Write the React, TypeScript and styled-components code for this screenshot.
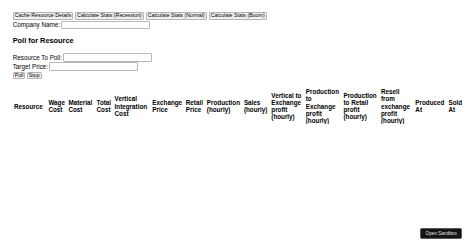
import styled, { createGlobalStyle } from "styled-components"

const GlobalStyle = createGlobalStyle`
  html, body {
    margin: 0;
    padding: 0;
    background: #ffffff;
  }
  body {
    font-family: "Liberation Sans", Arial, sans-serif;
    font-size: 6.3px;
    color: #000000;
  }
`

const Page = styled.div`
  padding: 12px 12.7px 0;
`

const Toolbar = styled.div`
  display: flex;
  gap: 1.8px;
  height: 8px;
`

const Button = styled.button<{ $h?: number }>`
  height: ${(p) => p.$h ?? 8}px;
  padding: 0 1px;
  margin: 0;
  font-family: "Liberation Sans", Arial, sans-serif;
  font-size: 5.25px;
  line-height: 1;
  color: #000000;
  background: #efefef;
  border: 1px solid #b4b4b4;
  border-radius: 1px;
  white-space: nowrap;
`

const FieldRow = styled.div<{ $h: number }>`
  display: flex;
  align-items: center;
  gap: 1px;
  height: ${(p) => p.$h}px;
  line-height: 1.15;
`

const TextInput = styled.input`
  box-sizing: border-box;
  width: 89px;
  height: 8.4px;
  margin: 0;
  padding: 0 1px;
  font-size: 5.25px;
  border: 1px solid #b8b8b8;
  border-radius: 1px;
  background: #ffffff;
`

const Heading = styled.h3`
  margin: 7.3px 0;
  font-size: 7.37px;
  line-height: 8.4px;
  font-weight: 700;
`

const ButtonRow = styled.div`
  display: flex;
  gap: 1.4px;
  margin-top: 0.5px;
`

const Table = styled.table`
  width: 100%;
  margin-top: 9.5px;
  border-collapse: collapse;
  table-layout: fixed;
`

const Col = styled.col<{ $w: number }>`
  width: ${(p) => p.$w}px;
`

const HeadCell = styled.th`
  padding: 0 1.3px;
  text-align: left;
  vertical-align: middle;
  font-weight: 700;
  font-size: 6.3px;
  line-height: 7.2px;
`

const SandboxButton = styled.button`
  position: fixed;
  right: 11.7px;
  bottom: 9px;
  height: 11.3px;
  padding: 0 4.5px;
  font-family: "Liberation Sans", Arial, sans-serif;
  font-size: 4.7px;
  color: #e6e6e6;
  background: #151515;
  border: 1px solid #5a5a5a;
  border-radius: 1.5px;
`

const columns: { label: string; w: number }[] = [
  { label: "Resource", w: 34.3 },
  { label: "Wage Cost", w: 20 },
  { label: "Material Cost", w: 28 },
  { label: "Total Cost", w: 18 },
  { label: "Vertical Integration Cost", w: 37.7 },
  { label: "Exchange Price", w: 33.3 },
  { label: "Retail Price", w: 21 },
  { label: "Production (hourly)", w: 37 },
  { label: "Sales (hourly)", w: 27.3 },
  { label: "Vertical to Exchange profit (hourly)", w: 34.4 },
  { label: "Production to Exchange profit (hourly)", w: 37.6 },
  { label: "Production to Retail profit (hourly)", w: 37.4 },
  { label: "Resell from exchange profit (hourly)", w: 34.3 },
  { label: "Produced At", w: 33 },
  { label: "Sold At", w: 14 },
]

export default function App() {
  return (
    <>
      <GlobalStyle />
      <Page>
        <Toolbar>
          <Button>Cache Resource Details</Button>
          <Button>Calculate Stats (Recession)</Button>
          <Button>Calculate Stats (Normal)</Button>
          <Button>Calculate Stats (Boom)</Button>
        </Toolbar>
        <FieldRow $h={10}>
          <label>Company Name:</label>
          <TextInput type="text" />
        </FieldRow>

        <Heading>Poll for Resource</Heading>
        <FieldRow $h={9}>
          <label>Resource To Poll:</label>
          <TextInput type="text" />
        </FieldRow>
        <FieldRow $h={9}>
          <label>Target Price:</label>
          <TextInput type="text" />
        </FieldRow>
        <ButtonRow>
          <Button $h={7.2}>Poll</Button>
          <Button $h={7.2}>Stop</Button>
        </ButtonRow>

        <Table>
          <colgroup>
            {columns.map((c) => (
              <Col key={c.label} $w={c.w} />
            ))}
          </colgroup>
          <thead>
            <tr>
              {columns.map((c) => (
                <HeadCell key={c.label}>{c.label}</HeadCell>
              ))}
            </tr>
          </thead>
          <tbody />
        </Table>
      </Page>
      <SandboxButton>Open Sandbox</SandboxButton>
    </>
  )
}
